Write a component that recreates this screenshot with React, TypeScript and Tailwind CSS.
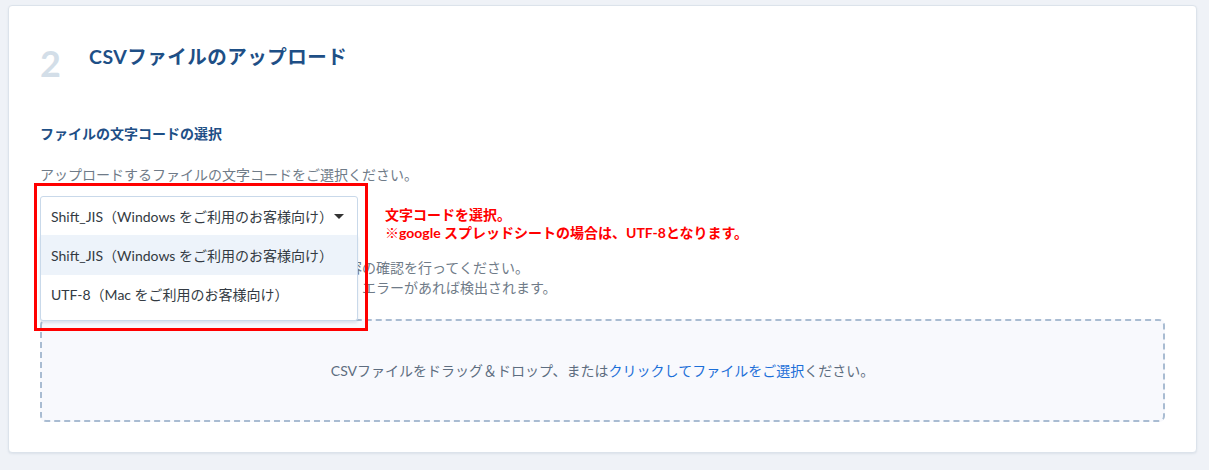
import { useState } from "react";

const options = [
  "Shift_JIS（Windows をご利用のお客様向け）",
  "UTF-8（Mac をご利用のお客様向け）",
];

function App() {
  const [selected, setSelected] = useState(0);
  const [open, setOpen] = useState(true);

  return (
    <div
      className="w-[1209px] h-[470px] bg-[#eff2f7] pt-[5px] pl-[8px]"
      style={{ fontFamily: "Lato, 'Noto Sans CJK JP', sans-serif" }}
    >
      <div className="relative w-[1189px] h-[448px] bg-white border border-[#dce3eb] rounded-[4px] shadow-[0_1px_2px_rgba(120,140,170,0.15)] pl-[31px] pr-[32px]">
        {/* heading */}
        <div className="flex items-center h-[60px] mt-[24px]">
          <span className="text-[36px] leading-none font-bold text-[#d3dee8] w-[49px] mt-[6px]">
            2
          </span>
          <h2 className="text-[19.5px] font-bold text-[#1e4f86] tracking-[0.5px] -mt-[6px]">
            CSVファイルのアップロード
          </h2>
        </div>

        <h3 className="mt-[34px] text-[14px] font-bold text-[#1e4f86] leading-[20px]">
          ファイルの文字コードの選択
        </h3>
        <p className="mt-[21px] text-[14px] text-[#6f7b88] leading-[20px]">
          アップロードするファイルの文字コードをご選択ください。
        </p>

        <div className="flex items-start mt-[11px]">
          <div className="relative w-[318px] z-10">
            <button
              onClick={() => setOpen(!open)}
              className="w-full h-[40px] flex items-center justify-between pl-[10px] pr-[13px] border border-[#c9d9ea] rounded-t-[3px] bg-white text-[14px] text-[#333a42]"
            >
              <span>{options[selected]}</span>
              <span className="w-0 h-0 border-l-[5px] border-r-[5px] border-t-[5px] border-l-transparent border-r-transparent border-t-[#333]" />
            </button>
            {open && (
              <ul className="absolute left-0 top-[39px] w-full h-[86px] bg-white border border-[#c9d9ea] border-t-0 rounded-b-[3px] shadow-[0_2px_3px_rgba(100,130,170,0.2)] text-[14px] text-[#333a42]">
                {options.map((o, i) => (
                  <li
                    key={o}
                    onClick={() => {
                      setSelected(i);
                      setOpen(false);
                    }}
                    className={
                      i === selected
                        ? "h-[40px] flex items-center pl-[10px] bg-[#edf3fa]"
                        : "h-[38px] flex items-center pl-[10px]"
                    }
                  >
                    {o}
                  </li>
                ))}
              </ul>
            )}
          </div>
          <div className="ml-[27px] mt-[10px] text-[14px] font-bold text-[#f00] leading-[18px]">
            <p>文字コードを選択。</p>
            <p>※google スプレッドシートの場合は、UTF-8となります。</p>
          </div>
        </div>

        <div className="mt-[16px] text-[14px] text-[#6f7b88] leading-[20px]">
          <p>アップロード後、取り込み前に必ずファイルの内容の確認を行ってください。</p>
          <p>取り込み時にデータ形式や必須項目をチェックし、エラーがあれば検出されます。</p>
        </div>

        <div className="mt-[21px] w-[1125px] h-[103px] border-2 border-dashed border-[#a9bcd2] rounded-[6px] bg-[#f8f9fd] flex items-center justify-center text-[14px] text-[#5d6d80]">
          <p>
            CSVファイルをドラッグ＆ドロップ、または
            <span className="text-[#1c6fd8] cursor-pointer">クリックしてファイルをご選択</span>
            ください。
          </p>
        </div>

        {/* annotation frame */}
        <div className="absolute left-[25px] top-[177px] w-[334px] h-[148px] border-[3px] border-[#ff0000] z-20 pointer-events-none" />
      </div>
    </div>
  );
}

export default App;
